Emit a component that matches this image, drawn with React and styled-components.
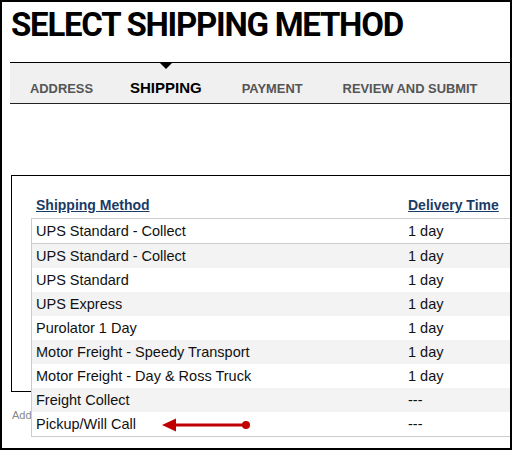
import React from "react";
import styled, { createGlobalStyle } from "styled-components";

const Global = createGlobalStyle`
  html, body { margin: 0; padding: 0; background: #fff; }
  * { box-sizing: border-box; }
`;

const Frame = styled.div`
  width: 512px;
  height: 450px;
  border: 2px solid #000;
  overflow: hidden;
  font-family: "Liberation Sans", Arial, sans-serif;
  color: #111;
`;

const Title = styled.h1`
  margin: 0;
  padding: 3px 0 0 9px;
  height: 43px;
  font-family: Roboto, "Liberation Sans", sans-serif;
  font-weight: 700;
  font-size: 33px;
  line-height: 40px;
  letter-spacing: -1.25px;
  color: #000;
`;

const Nav = styled.nav`
  margin: 17px 0 0 8px;
  height: 42px;
  border-top: 1px solid #000;
  border-bottom: 1px solid #222;
  background: #f0f0f0;
  display: flex;
  padding: 0 0 0 20px;
`;

const Tab = styled.div`
  position: relative;
  display: flex;
  align-items: flex-end;
  margin-right: ${(p) => p.$gap}px;
  padding-bottom: 7px;
  font-weight: 700;
  font-size: ${(p) => (p.$active ? "15px" : "12.9px")};
  color: ${(p) => (p.$active ? "#000" : "#555")};
  white-space: nowrap;
  &::before {
    content: "";
    display: ${(p) => (p.$active ? "block" : "none")};
    position: absolute;
    top: 0;
    left: 50%;
    transform: translateX(-50%);
    border-left: 6px solid transparent;
    border-right: 6px solid transparent;
    border-top: 6px solid #000;
  }
`;

const Box = styled.section`
  position: relative;
  margin: 71px 0 0 9px;
  height: 217px;
  border: 1px solid #000;
  border-right: none;
`;

const HeaderRow = styled.div`
  display: grid;
  grid-template-columns: 372px 1fr;
  margin: 21px 0 0 19px;
  font-size: 14px;
  font-weight: 700;
  line-height: 17px;
`;

const HeaderCell = styled.span`
  padding-left: 5px;
  color: #1a3b66;
  text-decoration: underline;
`;

const List = styled.div`
  position: absolute;
  z-index: 2;
  left: 19px;
  right: 0;
  top: 42px;
  background: #fff;
  border: 1px solid #ccc;
  border-right: none;
`;

const Row = styled.div`
  position: relative;
  display: grid;
  grid-template-columns: 372px 1fr;
  height: ${(p) => (p.$first ? "25px" : "24px")};
  align-items: center;
  background: ${(p) => (p.$alt ? "#f3f3f3" : "#fff")};
  border-bottom: ${(p) => (p.$first ? "1px solid #ccc" : "none")};
  font-size: 14.5px;
  color: #111;
`;

const Cell = styled.span`
  padding-left: 4px;
  white-space: nowrap;
`;

const Arrow = styled.svg`
  position: absolute;
  left: 128px;
  top: 5px;
`;

const AddNote = styled.div`
  margin: 17px 0 0 10px;
  font-size: 11px;
  line-height: 13px;
  color: #888;
`;

const rows = [
  ["UPS Standard - Collect", "1 day"],
  ["UPS Standard - Collect", "1 day"],
  ["UPS Standard", "1 day"],
  ["UPS Express", "1 day"],
  ["Purolator 1 Day", "1 day"],
  ["Motor Freight - Speedy Transport", "1 day"],
  ["Motor Freight - Day & Ross Truck", "1 day"],
  ["Freight Collect", "---"],
  ["Pickup/Will Call", "---"],
];

export default function App() {
  return (
    <>
      <Global />
      <Frame>
        <Title>SELECT SHIPPING METHOD</Title>
        <Nav>
          <Tab $gap={37}>ADDRESS</Tab>
          <Tab $active $gap={40}>SHIPPING</Tab>
          <Tab $gap={40}>PAYMENT</Tab>
          <Tab $gap={0}>REVIEW AND SUBMIT</Tab>
        </Nav>
        <Box>
          <HeaderRow>
            <HeaderCell>Shipping Method</HeaderCell>
            <HeaderCell>Delivery Time</HeaderCell>
          </HeaderRow>
          <List>
            {rows.map(([m, t], i) => (
              <Row key={i} $first={i === 0} $alt={i % 2 === 1}>
                <Cell>{m}</Cell>
                <Cell>{t}</Cell>
                {i === rows.length - 1 && (
                  <Arrow width="92" height="16" viewBox="0 0 92 16">
                    <polygon points="2,8 16,1.5 16,14.5" fill="#c00000" />
                    <line x1="15" y1="8" x2="86" y2="8" stroke="#c00000" strokeWidth="3" />
                    <circle cx="86" cy="8" r="4" fill="#c00000" />
                  </Arrow>
                )}
              </Row>
            ))}
          </List>
        </Box>
        <AddNote>Add</AddNote>
      </Frame>
    </>
  );
}
